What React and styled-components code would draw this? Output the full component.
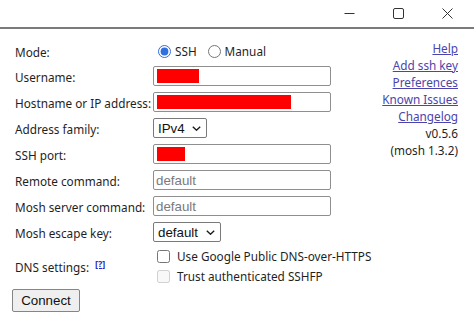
import React from "react";
import styled, { createGlobalStyle } from "styled-components";

const Global = createGlobalStyle`
  html, body { margin: 0; padding: 0; background: #fff; }
  body { width: 474px; height: 326px; overflow: hidden; }
`;

const Window = styled.div`
  position: relative;
  width: 474px;
  height: 326px;
  box-sizing: border-box;
  background: #fff;
  overflow: hidden;
  font-family: "Noto Sans", "Segoe UI", sans-serif;
  font-size: 11.75px;
  color: #1f1f1f;
`;

const TitleBar = styled.div`
  height: 27px;
  border-bottom: 2px solid #7b7b7b;
  display: flex;
  justify-content: flex-end;
  padding-right: 2px;
`;

const CaptionButton = styled.div`
  width: 49px;
  display: flex;
  align-items: center;
  justify-content: center;
  color: #222;
`;

const Content = styled.div`
  padding: 13px 16px 0 12px;
`;

const Form = styled.div`
  display: grid;
  grid-template-columns: 138px 178px 1fr;
  grid-auto-rows: auto;
  row-gap: 6px;
  align-items: center;
  margin-left: 3px;
`;

const Label = styled.div`
  grid-column: 1;
  line-height: 16px;
  white-space: nowrap;
  padding-top: 1px;
`;

const Radios = styled.div`
  grid-column: 2;
  display: flex;
  align-items: center;
  height: 18px;
`;

const RadioLabel = styled.label`
  display: inline-flex;
  align-items: center;
  margin-right: 6px;
`;

const Radio = styled.input`
  width: 13px;
  height: 13px;
  margin: 0 4px 0 5px;
  accent-color: #2f6fdf;
`;

const Field = styled.div`
  grid-column: 2;
  position: relative;
  height: 20px;
`;

const TextInput = styled.input`
  box-sizing: border-box;
  width: 178px;
  height: 20px;
  margin: 0;
  padding: 0 2px;
  border: 1px solid #8f8f8f;
  border-radius: 2px;
  font-family: "Liberation Sans", Arial, sans-serif;
  font-size: 13.33px;
  color: #111;
  background: #fff;
  &::placeholder { color: #7a7a7a; }
`;

const Redaction = styled.span`
  position: absolute;
  left: 4px;
  top: 3px;
  height: 14px;
  background: #ff0000;
`;

const SelectWrap = styled.div`
  grid-column: 2;
  position: relative;
  justify-self: start;
  display: inline-flex;
  height: 20px;
`;

const Select = styled.select`
  appearance: none;
  -webkit-appearance: none;
  box-sizing: border-box;
  height: 20px;
  margin: 0;
  padding: 0 21px 0 4px;
  border: 1px solid #7a7a7a;
  border-radius: 2px;
  background: #fff;
  font-family: "Liberation Sans", Arial, sans-serif;
  font-size: 13.33px;
  color: #111;
`;

const Chevron = styled.svg`
  position: absolute;
  right: 6px;
  top: 8px;
  pointer-events: none;
`;

const Links = styled.div`
  grid-column: 3;
  grid-row: 1 / span 6;
  justify-self: end;
  align-self: start;
  display: flex;
  flex-direction: column;
  align-items: flex-end;
  line-height: 17px;
  margin-top: -2px;
`;

const Link = styled.a`
  color: #4b44ad;
  text-decoration: underline;
  cursor: pointer;
`;

const Plain = styled.span`
  color: #1f1f1f;
`;

const Help = styled.span`
  position: relative;
  top: -5px;
  color: #2626c8;
  font-weight: bold;
  font-size: 9px;
  margin-left: 6px;
  text-decoration: underline;
`;

const Checks = styled.div`
  grid-column: 2 / -1;
  display: flex;
  flex-direction: column;
  margin-top: -2px;
`;

const CheckRow = styled.label`
  display: flex;
  align-items: center;
  height: 20px;
  white-space: nowrap;
`;

const Check = styled.input`
  width: 13px;
  height: 13px;
  margin: 0 7px 0 4px;
`;

const ConnectButton = styled.button`
  margin-top: 3px;
  width: 68px;
  height: 23px;
  padding: 0;
  border: 1px solid #858585;
  border-radius: 2px;
  background: #efefef;
  font-family: "Liberation Sans", Arial, sans-serif;
  font-size: 13.33px;
  color: #111;
`;

function SelectBox({ value, options }) {
  return (
    <SelectWrap>
      <Select defaultValue={value}>
        {options.map((o) => (
          <option key={o}>{o}</option>
        ))}
      </Select>
      <Chevron width="9" height="5" viewBox="0 0 9 5">
        <path d="M0.8 0.8 L4.5 4.2 L8.2 0.8" fill="none" stroke="#1a1a1a" strokeWidth="1.4" />
      </Chevron>
    </SelectWrap>
  );
}

function InputField({ redact, placeholder }) {
  return (
    <Field>
      <TextInput placeholder={placeholder} />
      {redact ? <Redaction style={{ width: redact }} /> : null}
    </Field>
  );
}

export default function App() {
  return (
    <>
      <Global />
      <Window>
        <TitleBar>
          <CaptionButton>
            <svg width="11" height="11" viewBox="0 0 11 11">
              <path d="M0.5 5.5 H10.5" stroke="#333" strokeWidth="1" />
            </svg>
          </CaptionButton>
          <CaptionButton>
            <svg width="11" height="11" viewBox="0 0 11 11">
              <rect x="0.5" y="0.5" width="10" height="10" rx="1.5" fill="none" stroke="#333" strokeWidth="1" />
            </svg>
          </CaptionButton>
          <CaptionButton>
            <svg width="11" height="11" viewBox="0 0 11 11">
              <path d="M0.5 0.5 L10.5 10.5 M10.5 0.5 L0.5 10.5" stroke="#333" strokeWidth="1" />
            </svg>
          </CaptionButton>
        </TitleBar>
        <Content>
          <Form>
            <Label>Mode:</Label>
            <Radios>
              <RadioLabel>
                <Radio type="radio" name="mode" defaultChecked />
                SSH
              </RadioLabel>
              <RadioLabel>
                <Radio type="radio" name="mode" />
                Manual
              </RadioLabel>
            </Radios>
            <Links>
              <Link>Help</Link>
              <Link>Add ssh key</Link>
              <Link>Preferences</Link>
              <Link>Known Issues</Link>
              <Link>Changelog</Link>
              <Plain>v0.5.6</Plain>
              <Plain>(mosh 1.3.2)</Plain>
            </Links>

            <Label>Username:</Label>
            <InputField redact={42} />

            <Label>Hostname or IP address:</Label>
            <InputField redact={134} />

            <Label>Address family:</Label>
            <SelectBox value="IPv4" options={["IPv4", "IPv6"]} />

            <Label>SSH port:</Label>
            <InputField redact={28} />

            <Label>Remote command:</Label>
            <InputField placeholder="default" />

            <Label>Mosh server command:</Label>
            <InputField placeholder="default" />

            <Label>Mosh escape key:</Label>
            <SelectBox value="default" options={["default", "none"]} />

            <Label>
              DNS settings:<Help>[?]</Help>
            </Label>
            <Checks>
              <CheckRow>
                <Check type="checkbox" />
                Use Google Public DNS-over-HTTPS
              </CheckRow>
              <CheckRow>
                <Check type="checkbox" disabled />
                Trust authenticated SSHFP
              </CheckRow>
            </Checks>
          </Form>
          <ConnectButton>Connect</ConnectButton>
        </Content>
      </Window>
    </>
  );
}
